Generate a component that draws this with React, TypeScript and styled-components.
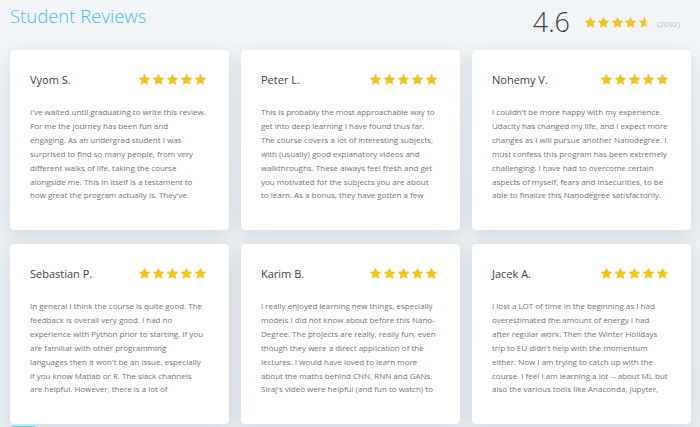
import styled, { createGlobalStyle } from 'styled-components';

const GlobalStyle = createGlobalStyle`
  html, body {
    margin: 0;
    padding: 0;
    height: 427px;
    overflow: hidden;
  }
  body {
    background: linear-gradient(180deg, #f3f6f8 0%, #edf2f5 40%, #e9f0f3 100%);
    font-family: 'Open Sans', 'Liberation Sans', sans-serif;
  }
`;

const Page = styled.div`
  padding: 0 10px;
  box-sizing: border-box;
  width: 700px;
`;

const Header = styled.div`
  display: flex;
  align-items: flex-start;
  justify-content: space-between;
  height: 50px;
`;

const Title = styled.h2`
  margin: 3px 0 0;
  font-size: 18.5px;
  font-weight: 300;
  color: #48bde8;
`;

const Summary = styled.div`
  display: flex;
  align-items: center;
  margin-top: 3px;
  margin-right: 10px;
`;

const Score = styled.span`
  font-size: 27px;
  font-weight: 300;
  color: #3c3f45;
  margin-right: 14px;
  line-height: 38px;
`;

const Count = styled.span`
  font-size: 8px;
  color: #b7bcc2;
  margin-left: 6px;
  padding-top: 2px;
`;

const Grid = styled.div`
  display: grid;
  grid-template-columns: repeat(3, 219px);
  column-gap: 12px;
  row-gap: 14px;
`;

const Card = styled.div`
  background: #fff;
  border-radius: 4px;
  height: 180px;
  box-sizing: border-box;
  padding: 20px 20px 0 20px;
  box-shadow: 0 4px 18px rgba(40, 70, 90, 0.14);
  overflow: hidden;
`;

const CardHead = styled.div`
  display: flex;
  align-items: center;
  justify-content: space-between;
  height: 18px;
  margin: 0 2px 17px 0;
`;

const Name = styled.span`
  font-size: 11px;
  color: #3b3e44;
`;

const Body = styled.p`
  margin: 0;
  width: 175.8px;
  font-size: 8px;
  line-height: 13.9px;
  color: #6f737b;
`;

const StarRow = styled.div<{ $size: number; $gap: number }>`
  display: flex;
  gap: ${({ $gap }) => $gap}px;
  svg {
    width: ${({ $size }) => $size}px;
    height: ${({ $size }) => $size}px;
    display: block;
  }
`;

const MoreButton = styled.div`
  margin-top: 2px;
  width: 26px;
  height: 6px;
  background: #5fd6e0;
  border-radius: 3px;
`;

const STAR = 'M12 1.5l3.2 6.7 7.3 1-5.3 5.1 1.3 7.3L12 18.1l-6.5 3.5 1.3-7.3-5.3-5.1 7.3-1z';

const Star = ({ fill }: { fill: number }) => (
  <svg viewBox="0 0 24 24">
    <defs>
      <clipPath id={`half-${fill}`}>
        <rect x="0" y="0" width={24 * fill} height="24" />
      </clipPath>
    </defs>
    <path d={STAR} fill="#e4e6e9" />
    <path d={STAR} fill="#f5c312" clipPath={`url(#half-${fill})`} />
  </svg>
);

const Stars = ({ rating, size, gap = 1 }: { rating: number; size: number; gap?: number }) => (
  <StarRow $size={size} $gap={gap}>
    {[0, 1, 2, 3, 4].map(i => (
      <Star key={i} fill={Math.max(0, Math.min(1, rating - i))} />
    ))}
  </StarRow>
);

const reviews = [
  {
    name: 'Vyom S.',
    text: "I've waited until graduating to write this review. For me the journey has been fun and engaging. As an undergrad student I was surprised to find so many people, from very different walks of life, taking the course alongside me. This in itself is a testament to how great the program actually is. They've",
  },
  {
    name: 'Peter L.',
    text: 'This is probably the most approachable way to get into deep learning I have found thus far. The course covers a lot of interesting subjects, with (usually) good explanatory videos and walkthroughs. These always feel fresh and get you motivated for the subjects you are about to learn. As a bonus, they have gotten a few',
  },
  {
    name: 'Nohemy V.',
    text: "I couldn't be more happy with my experience. Udacity has changed my life, and I expect more changes as I will pursue another Nanodegree. I must confess this program has been extremely challenging. I have had to overcome certain aspects of myself, fears and insecurities, to be able to finalize this Nanodegree satisfactorily.",
  },
  {
    name: 'Sebastian P.',
    text: "In general I think the course is quite good. The feedback is overall very good. I had no experience with Python prior to starting. If you are familiar with other programming languages then it won't be an issue, especially if you know Matlab or R. The slack channels are helpful. However, there is a lot of",
  },
  {
    name: 'Karim B.',
    text: "I really enjoyed learning new things, especially models I did not know about before this Nano-Degree. The projects are really, really fun, even though they were a direct application of the lectures. I would have loved to learn more about the maths behind CNN, RNN and GANs. Siraj's video were helpful (and fun to watch) to",
  },
  {
    name: 'Jacek A.',
    text: "I lost a LOT of time in the beginning as I had overestimated the amount of energy I had after regular work. Then the Winter Holidays trip to EU didn't help with the momentum either. Now I am trying to catch up with the course. I feel I am learning a lot -- about ML but also the various tools like Anaconda, Jupyter,",
  },
];

const App = () => {
  return (
    <>
      <GlobalStyle />
      <Page>
        <Header>
          <Title>Student Reviews</Title>
          <Summary>
            <Score>4.6</Score>
            <Stars rating={4.6} size={13} gap={0.5} />
            <Count>(2092)</Count>
          </Summary>
        </Header>
        <Grid>
          {reviews.map(review => (
            <Card key={review.name}>
              <CardHead>
                <Name>{review.name}</Name>
                <Stars rating={5} size={13} />
              </CardHead>
              <Body>{review.text}</Body>
            </Card>
          ))}
        </Grid>
        <MoreButton />
      </Page>
    </>
  );
};

export default App;
